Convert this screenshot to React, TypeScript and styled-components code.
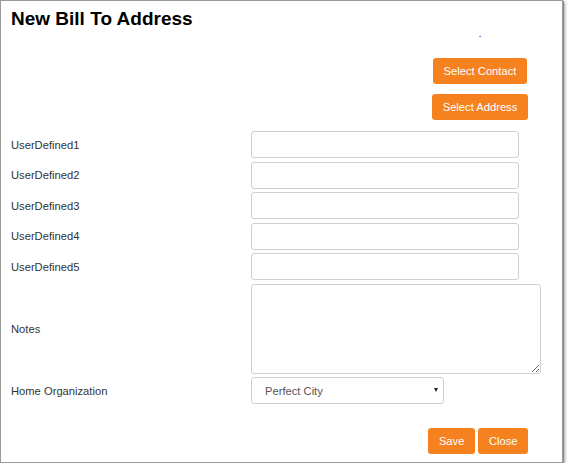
import React from "react";
import styled, { createGlobalStyle } from "styled-components";

const GlobalStyle = createGlobalStyle`
  html, body {
    margin: 0;
    padding: 0;
    background: #ffffff;
  }
  body {
    font-family: "Liberation Sans", Arial, sans-serif;
  }
`;

const Dialog = styled.div`
  box-sizing: border-box;
  width: 563px;
  height: 463px;
  padding: 9px 0 0 10px;
  background: #ffffff;
  border: 1px solid #9a9a9a;
  box-shadow: 1px 1px 0 #8a8a8a, 2px 2px 3px rgba(0, 0, 0, 0.35);
  display: flex;
  flex-direction: column;
`;

const Title = styled.h1`
  margin: 0;
  font-size: 19px;
  line-height: 18px;
  font-weight: 700;
  color: #000000;
`;

const ActionColumn = styled.div`
  align-self: flex-end;
  width: 110px;
  margin-right: 27px;
  display: flex;
  flex-direction: column;
  align-items: center;
`;

const Dot = styled.span`
  font-size: 11px;
  line-height: 10px;
  height: 10px;
  color: #333333;
`;

const OrangeButton = styled.button<{ $top?: number }>`
  box-sizing: border-box;
  height: 26px;
  margin-top: ${(p) => p.$top ?? 0}px;
  padding: 0 10.5px;
  border: none;
  border-radius: 3px;
  background: #f5821f;
  color: #ffffff;
  font-family: "Liberation Sans", Arial, sans-serif;
  font-size: 11.2px;
  cursor: pointer;
`;

const FormGrid = styled.div`
  margin-top: 11px;
  display: grid;
  grid-template-columns: 240px 1fr;
  row-gap: 3.5px;
  align-items: center;
`;

const Label = styled.label`
  font-size: 11.2px;
  color: #333333;
`;

const TextInput = styled.input`
  box-sizing: border-box;
  width: 268px;
  height: 27px;
  margin: 0;
  border: 1px solid #cfcfcf;
  border-radius: 3px;
  background: #ffffff;
  font-family: inherit;
  font-size: 11.2px;
  padding: 0 8px;
`;

const NotesArea = styled.textarea`
  box-sizing: border-box;
  display: block;
  width: 290px;
  height: 90px;
  margin: 0;
  border: 1px solid #cfcfcf;
  border-radius: 3px;
  font-family: inherit;
  font-size: 11.2px;
`;

const SelectWrap = styled.div`
  position: relative;
  width: 193px;
  height: 27px;
`;

const Select = styled.select`
  box-sizing: border-box;
  appearance: none;
  width: 100%;
  height: 100%;
  margin: 0;
  padding: 0 0 0 13px;
  border: 1px solid #cfcfcf;
  border-radius: 3px;
  background: #ffffff;
  color: #555555;
  font-family: inherit;
  font-size: 11.2px;
`;

const Caret = styled.span`
  position: absolute;
  right: 6px;
  top: 11px;
  width: 0;
  height: 0;
  border-left: 2.5px solid transparent;
  border-right: 2.5px solid transparent;
  border-top: 4px solid #222222;
  pointer-events: none;
`;

const Footer = styled.div`
  margin-top: 24px;
  padding-right: 34px;
  display: flex;
  justify-content: flex-end;
  gap: 3.5px;
`;

const fields = ["UserDefined1", "UserDefined2", "UserDefined3", "UserDefined4", "UserDefined5"];

const App: React.FC = () => {
  return (
    <>
      <GlobalStyle />
      <Dialog>
        <Title>New Bill To Address</Title>
        <ActionColumn>
          <Dot>.</Dot>
          <OrangeButton $top={20}>Select Contact</OrangeButton>
          <OrangeButton $top={10}>Select Address</OrangeButton>
        </ActionColumn>

        <FormGrid>
          {fields.map((f) => (
            <React.Fragment key={f}>
              <Label>{f}</Label>
              <TextInput type="text" />
            </React.Fragment>
          ))}
          <Label>Notes</Label>
          <NotesArea />
          <Label>Home Organization</Label>
          <SelectWrap>
            <Select defaultValue="Perfect City">
              <option>Perfect City</option>
            </Select>
            <Caret />
          </SelectWrap>
        </FormGrid>

        <Footer>
          <OrangeButton>Save</OrangeButton>
          <OrangeButton>Close</OrangeButton>
        </Footer>
      </Dialog>
    </>
  );
};

export default App;
